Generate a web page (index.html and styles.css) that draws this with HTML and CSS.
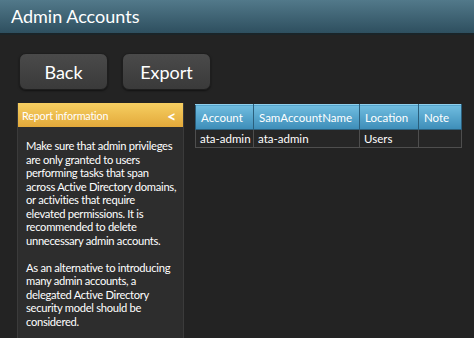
FILE: index.html
```html
<!DOCTYPE html>
<html lang="en">
<head>
    <meta charset="UTF-8">
    <title>Admin Accounts</title>
    <link rel="stylesheet" href="styles.css">
</head>
<body>
    <div class="titlebar">Admin Accounts</div>
    <div class="toolbar">
        <button type="button" class="btn">Back</button>
        <button type="button" class="btn">Export</button>
    </div>
    <div class="content">
        <div class="panel">
            <div class="panel-head">
                <span>Report information</span>
                <span class="collapse">&lt;</span>
            </div>
            <div class="panel-body">
                <p>Make sure that admin privileges are only granted to users performing tasks that span across Active Directory domains, or activities that require <span class="keep">elevated permissions.</span> It is recommended to delete unnecessary admin accounts.</p>
                <p>As an alternative to introducing many admin accounts, a delegated Active Directory security model should be considered.</p>
            </div>
        </div>
        <table class="grid">
            <colgroup>
                <col class="c1">
                <col class="c2">
                <col class="c3">
                <col class="c4">
            </colgroup>
            <tr>
                <th>Account</th>
                <th>SamAccountName</th>
                <th>Location</th>
                <th>Note</th>
            </tr>
            <tr>
                <td>ata-admin</td>
                <td>ata-admin</td>
                <td>Users</td>
                <td></td>
            </tr>
        </table>
    </div>
</body>
</html>
```

FILE: styles.css
```css
body {
    margin: 0;
    background: #232323;
    color: #fff;
    font-family: Lato, "Open Sans", sans-serif;
    overflow: hidden;
}

.titlebar {
    height: 33px;
    line-height: 33px;
    padding-left: 11px;
    font-size: 18px;
    background: linear-gradient(to bottom, #52798a, #2e4f5f);
    border-bottom: 2px solid #1a2428;
}

.toolbar {
    display: flex;
    gap: 14px;
    padding: 18px 0 0 19px;
    height: 50px;
}

.btn {
    width: 89px;
    height: 37px;
    border-radius: 7px;
    border: 1px solid #1e1e1e;
    background: linear-gradient(to bottom, #4a4a4a, #3a3a3a);
    color: #fff;
    font-family: inherit;
    font-size: 18px;
    box-shadow: 0 1px 2px rgba(0, 0, 0, 0.5);
}

.content {
    display: flex;
    align-items: flex-start;
    padding-left: 17px;
    gap: 11px;
}

.panel {
    width: 167px;
    height: 240px;
    border: 1px solid #3b3b3b;
    border-top: none;
    background: #2d2d2d;
    box-sizing: border-box;
}

.panel-head {
    display: flex;
    justify-content: space-between;
    align-items: center;
    height: 24px;
    padding: 0 7px 0 4px;
    font-size: 10.8px;
    letter-spacing: -0.2px;
    background: linear-gradient(to bottom, #f6cf62, #e3a93a);
}

.collapse {
    font-size: 16px;
    font-weight: bold;
}

.panel-body {
    padding: 12px 6px 0 8px;
    font-size: 11.2px;
    line-height: 13.5px;
    letter-spacing: -0.3px;
}

.panel-body p {
    margin: 0 0 13.5px 0;
}

.keep {
    white-space: nowrap;
}

.grid {
    border-collapse: collapse;
    table-layout: fixed;
    width: 266px;
    font-size: 11.5px;
    margin-top: 1px;
    white-space: nowrap;
}

.grid th {
    height: 24px;
    padding: 0 5px;
    text-align: left;
    font-weight: normal;
    background: linear-gradient(to bottom, #70bde0, #3d8db8);
    border: 1px solid #2b5f7c;
    border-top-color: #8fd0ee;
}

.grid td {
    height: 17px;
    padding: 0 4px;
    background: #262626;
    border: 1px solid #4e4e4e;
}

.c1 { width: 58px; }
.c2 { width: 106px; }
.c3 { width: 59px; }
.c4 { width: 43px; }
```
